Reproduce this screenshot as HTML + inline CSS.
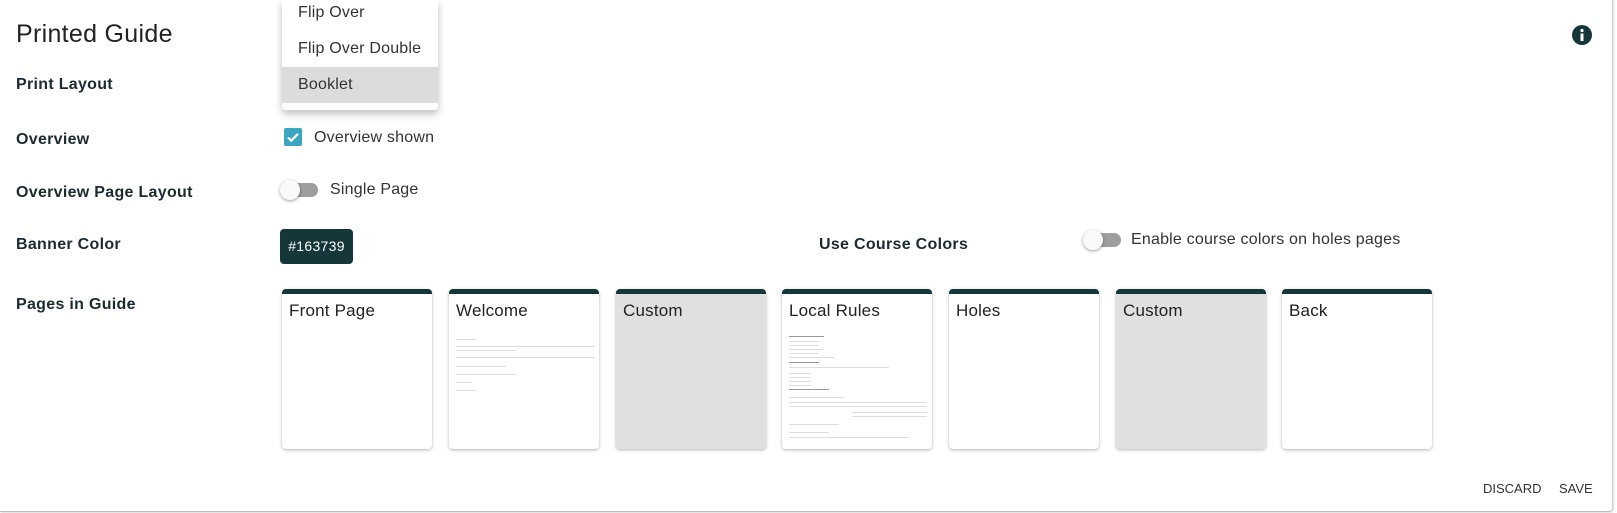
<!DOCTYPE html>
<html><head><style>
*{margin:0;padding:0;box-sizing:border-box}
body{width:1617px;height:513px;background:#fff;font-family:"Liberation Sans",sans-serif;position:relative;overflow:hidden;color:#1e2a2e}
.panel{position:absolute;left:0;top:-4px;width:1613px;height:516px;border-right:1px solid #cfcfcf;border-bottom:1px solid #bdbdbd;border-radius:0 0 4px 0;box-shadow:1px 1px 2px rgba(0,0,0,.15)}
.a{position:absolute;white-space:nowrap}
.lbl{font-weight:bold;font-size:16px;color:#1b2b30;left:16px;letter-spacing:.3px}
.menu{left:282px;top:0;width:156px;height:110px;background:#fff;box-shadow:0 4px 8px rgba(0,0,0,.25);border-radius:0 0 4px 4px}
.item{position:absolute;left:0;width:156px;height:36px;line-height:36px;padding-left:16px;font-size:16px;color:#333;letter-spacing:.2px}
.txt{font-size:16px;color:#333;letter-spacing:.2px}
.trk{width:34px;height:14px;border-radius:7px;background:#9e9e9e}
.knob{width:20px;height:20px;border-radius:50%;background:#fafafa;box-shadow:0 1px 3px rgba(0,0,0,.4)}
.card{position:absolute;top:289px;width:150px;height:160px;border-radius:4px;border-top:5px solid #163739;box-shadow:0 1px 3px rgba(0,0,0,.3);background:#fff}
.card.g{background:#e0e0e0}
.card .t{position:absolute;left:7px;top:7px;font-size:17px;color:#222;letter-spacing:.2px}
.ln{position:absolute;height:1px;background:#ddd}
</style></head><body>
<div class="panel"></div>
<div class="a" style="left:16px;top:20px;font-size:25px;color:#222;letter-spacing:.3px">Printed Guide</div>
<div class="a lbl" style="top:76px">Print Layout</div>
<div class="a lbl" style="top:131px">Overview</div>
<div class="a lbl" style="top:184px">Overview Page Layout</div>
<div class="a lbl" style="top:236px">Banner Color</div>
<div class="a lbl" style="top:296px">Pages in Guide</div>
<div class="a menu">
<div class="item" style="top:-5px">Flip Over</div>
<div class="item" style="top:31px">Flip Over Double</div>
<div class="item" style="top:67px;background:#dcdcdc">Booklet</div>
</div>
<div class="a" style="left:284px;top:128px;width:18px;height:18px;background:#3aa6c2;border-radius:2px">
<svg width="18" height="18" viewBox="0 0 18 18"><path d="M4 9.5l3.2 3.2L14 5.8" stroke="#fff" stroke-width="2.2" fill="none"/></svg></div>
<div class="a txt" style="left:314px;top:129px">Overview shown</div>
<div class="a trk" style="left:284px;top:183px"></div>
<div class="a knob" style="left:280px;top:180px"></div>
<div class="a txt" style="left:330px;top:181px">Single Page</div>
<div class="a" style="left:280px;top:229px;width:73px;height:35px;background:#163739;border-radius:4px;color:#fff;font-size:14px;line-height:35px;text-align:center;letter-spacing:.3px">#163739</div>
<div class="a lbl" style="left:819px;top:236px">Use Course Colors</div>
<div class="a trk" style="left:1087px;top:233px"></div>
<div class="a knob" style="left:1083px;top:230px"></div>
<div class="a txt" style="left:1131px;top:231px">Enable course colors on holes pages</div>
<svg class="a" style="left:1571px;top:24px" width="22" height="22" viewBox="0 0 22 22"><circle cx="11" cy="11" r="10" fill="#163739"/><circle cx="11" cy="6.5" r="1.6" fill="#fff"/><rect x="9.5" y="9.5" width="3" height="7.5" fill="#fff"/></svg>
<div class="card" style="left:282px"><div class="t">Front Page</div></div>
<div class="card" style="left:449px"><div class="t">Welcome</div>
<div class="ln" style="left:7px;top:45px;width:20px"></div>
<div class="ln" style="left:7px;top:52px;width:138px"></div>
<div class="ln" style="left:7px;top:56px;width:60px"></div>
<div class="ln" style="left:7px;top:63px;width:138px"></div>
<div class="ln" style="left:7px;top:72px;width:50px"></div>
<div class="ln" style="left:7px;top:80px;width:60px"></div>
<div class="ln" style="left:7px;top:88px;width:15px"></div>
<div class="ln" style="left:7px;top:96px;width:20px"></div>
</div>
<div class="card g" style="left:616px"><div class="t">Custom</div></div>
<div class="card" style="left:782px"><div class="t">Local Rules</div>
<div class="ln" style="left:7px;top:42px;width:35px;background:#999"></div>
<div class="ln" style="left:7px;top:47px;width:30px"></div>
<div class="ln" style="left:7px;top:51px;width:30px"></div>
<div class="ln" style="left:7px;top:55px;width:35px"></div>
<div class="ln" style="left:7px;top:59px;width:30px"></div>
<div class="ln" style="left:7px;top:63px;width:45px"></div>
<div class="ln" style="left:7px;top:68px;width:30px;background:#999"></div>
<div class="ln" style="left:7px;top:73px;width:100px"></div>
<div class="ln" style="left:7px;top:79px;width:22px"></div>
<div class="ln" style="left:7px;top:83px;width:22px"></div>
<div class="ln" style="left:7px;top:87px;width:22px"></div>
<div class="ln" style="left:7px;top:91px;width:22px"></div>
<div class="ln" style="left:7px;top:95px;width:40px;background:#99a"></div>
<div class="ln" style="left:7px;top:103px;width:55px"></div>
<div class="ln" style="left:7px;top:108px;width:138px"></div>
<div class="ln" style="left:7px;top:112px;width:138px"></div>
<div class="ln" style="left:70px;top:118px;width:75px"></div>
<div class="ln" style="left:70px;top:122px;width:75px"></div>
<div class="ln" style="left:7px;top:130px;width:50px"></div>
<div class="ln" style="left:7px;top:138px;width:40px"></div>
<div class="ln" style="left:7px;top:143px;width:120px"></div>
</div>
<div class="card" style="left:949px"><div class="t">Holes</div></div>
<div class="card g" style="left:1116px"><div class="t">Custom</div></div>
<div class="card" style="left:1282px"><div class="t">Back</div></div>
<div class="a" style="left:1483px;top:481px;font-size:13px;color:#333">DISCARD</div>
<div class="a" style="left:1559px;top:481px;font-size:13px;color:#333">SAVE</div>
</body></html>
